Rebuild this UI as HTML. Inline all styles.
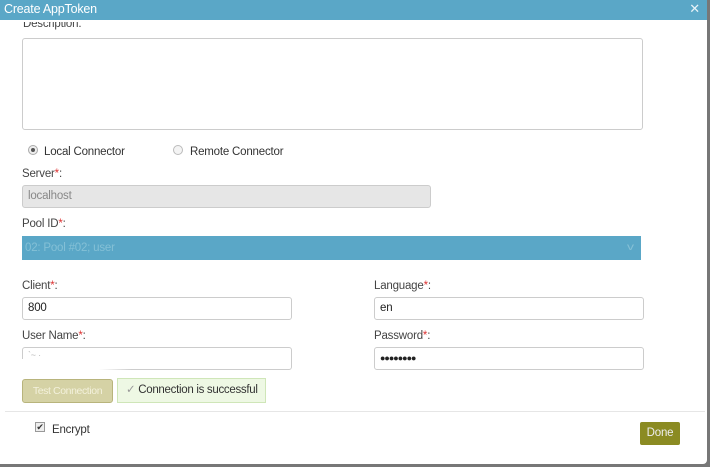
<!DOCTYPE html>
<html><head><meta charset="utf-8"><style>
*{box-sizing:border-box;margin:0;padding:0}
body{width:710px;height:467px;background:#777;font-family:"Liberation Sans",sans-serif;font-size:11.5px;letter-spacing:-0.2px;color:#333;position:relative;overflow:hidden}
.dlg{position:absolute;left:0;top:0;width:707px;height:464px;background:#fff;border-radius:0 0 4px 0}
.hdr{position:absolute;left:0;top:0;width:707px;height:20px;background:#5aa7c7;color:#fff;font-size:12.5px;line-height:18px;padding-left:4px}
.x{position:absolute;right:7px;top:1px;font-size:13px;color:#e8f3f8;line-height:16px}
.a{position:absolute;white-space:nowrap}
.lbl{position:absolute;color:#444;white-space:nowrap}
.lbl i{color:#d33;font-style:normal}
.inp{position:absolute;border:1px solid #ccc;border-radius:3px;background:#fff;padding-left:5px;color:#222}
</style></head><body>
<div class="dlg">
<div class="hdr">Create AppToken<span class="x">✕</span></div>
<div class="lbl" style="left:23px;top:22px;height:9px;overflow:hidden;line-height:4px">Description:</div>
<div class="inp" style="left:22px;top:38px;width:621px;height:92px"></div>
<div class="a" style="left:28px;top:145px;width:10px;height:10px;border-radius:50%;border:1px solid #aaa;background:#eee"><div style="margin:2px;width:4px;height:4px;border-radius:50%;background:#555"></div></div>
<div class="lbl" style="left:44px;top:146px;color:#333">Local Connector</div>
<div class="a" style="left:173px;top:145px;width:10px;height:10px;border-radius:50%;border:1px solid #bbb;background:#f4f4f4"></div>
<div class="lbl" style="left:190px;top:146px;color:#333">Remote Connector</div>
<div class="lbl" style="left:22px;top:168px">Server<i>*</i>:</div>
<div class="inp" style="left:22px;top:185px;width:409px;height:23px;background:#e6e6e6;color:#888;line-height:21px">localhost</div>
<div class="lbl" style="left:22px;top:218px">Pool ID<i>*</i>:</div>
<div class="a" style="left:22px;top:236px;width:619px;height:24px;background:#5aa7c7;color:#84c0d6;line-height:24px;padding-left:3px">02: Pool #02; user<span style="position:absolute;right:8px;font-size:10px;transform:scaleX(1.4)">v</span></div>
<div class="lbl" style="left:22px;top:280px">Client<i>*</i>:</div>
<div class="lbl" style="left:374px;top:280px">Language<i>*</i>:</div>
<div class="inp" style="left:22px;top:297px;width:270px;height:23px;line-height:21px">800</div>
<div class="inp" style="left:374px;top:297px;width:270px;height:23px;line-height:21px">en</div>
<div class="lbl" style="left:22px;top:330px">User Name<i>*</i>:</div>
<div class="lbl" style="left:374px;top:330px">Password<i>*</i>:</div>
<div class="inp" style="left:22px;top:347px;width:270px;height:23px;line-height:14px;color:#bbb;font-size:9px">`~ ·</div>
<div class="a" style="left:22px;top:359px;width:110px;height:12px;background:linear-gradient(90deg,#fff 70%,rgba(255,255,255,0))"></div>
<div class="inp" style="left:374px;top:347px;width:270px;height:23px;line-height:21px;font-size:9px;letter-spacing:-1px">●●●●●●●●</div>
<div class="a" style="left:22px;top:379px;width:91px;height:24px;background:#d5d2a5;border:1px solid #b8b47c;border-radius:3px;color:#f3f1dc;line-height:22px;text-align:center;font-size:10.5px;letter-spacing:-0.4px">Test Connection</div>
<div class="a" style="left:117px;top:378px;width:149px;height:25px;background:#eef8e4;border:1px solid #cfe6b8;line-height:23px;padding-left:8px;color:#333;letter-spacing:-0.3px"><span style="color:#999">✓</span> Connection is successful</div>
<div class="a" style="left:5px;top:411px;width:700px;height:1px;background:#e6e6e6"></div>
<div class="a" style="left:35px;top:422px;width:10px;height:10px;border:1px solid #999;background:#eee;font-size:9px;line-height:8px;color:#333;text-align:center">✔</div>
<div class="lbl" style="left:52px;top:424px;color:#333">Encrypt</div>
<div class="a" style="left:640px;top:422px;width:40px;height:23px;background:#8b8b22;border-radius:2px;color:#eee;line-height:22px;text-align:center">Done</div>
</div>
</body></html>
